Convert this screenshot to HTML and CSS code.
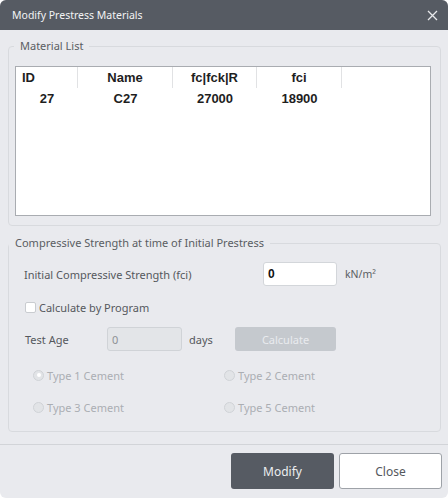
FILE: index.html
```html
<!DOCTYPE html>
<html>
<head>
<meta charset="utf-8">
<link rel="stylesheet" href="styles.css">
</head>
<body>
<div class="dialog">
  <div class="titlebar">
    <span class="title">Modify Prestress Materials</span>
    <svg class="close-x" width="11" height="11" viewBox="0 0 11 11"><path d="M1 1 L10 10 M10 1 L1 10" stroke="#e8e9eb" stroke-width="1.3" fill="none"/></svg>
  </div>
  <div class="body">
    <fieldset class="group group-list">
      <legend>Material List</legend>
      <div class="group-inner list-inner">
        <div class="listbox">
          <div class="lrow lhead">
            <div class="c c1 left">ID</div>
            <div class="c c2">Name</div>
            <div class="c c3">fc|fck|R</div>
            <div class="c c4">fci</div>
            <div class="c c5"></div>
          </div>
          <div class="lrow ldata">
            <div class="c c1">27</div>
            <div class="c c2">C27</div>
            <div class="c c3">27000</div>
            <div class="c c4">18900</div>
            <div class="c c5"></div>
          </div>
        </div>
      </div>
    </fieldset>
    <fieldset class="group group-strength">
      <legend>Compressive Strength at time of Initial Prestress</legend>
      <div class="group-inner strength-inner">
        <div class="row row-fci">
          <span class="lbl lbl-fci">Initial Compressive Strength (fci)</span>
          <div class="input">0</div>
          <span class="unit">kN/m²</span>
        </div>
        <div class="row row-check">
          <span class="checkbox"></span>
          <span class="lbl">Calculate by Program</span>
        </div>
        <div class="row row-age">
          <span class="lbl lbl-age">Test Age</span>
          <div class="input input-disabled">0</div>
          <span class="lbl lbl-days">days</span>
          <div class="btn-calc">Calculate</div>
        </div>
        <div class="row row-radio">
          <div class="radio-item"><span class="radio checked"></span><span>Type 1 Cement</span></div>
          <div class="radio-item"><span class="radio"></span><span>Type 2 Cement</span></div>
        </div>
        <div class="row row-radio row-radio2">
          <div class="radio-item"><span class="radio"></span><span>Type 3 Cement</span></div>
          <div class="radio-item"><span class="radio"></span><span>Type 5 Cement</span></div>
        </div>
      </div>
    </fieldset>
  </div>
  <div class="footer">
    <div class="btn btn-primary">Modify</div>
    <div class="btn btn-secondary">Close</div>
  </div>
</div>
</body>
</html>
```
FILE: styles.css
```css
html, body {
  margin: 0;
  padding: 0;
  background: #ffffff;
}
body {
  font-family: "Noto Sans", "Liberation Sans", Arial, sans-serif;
  font-size: 11px;
  color: #55585d;
}
.dialog {
  width: 448px;
  height: 498px;
  background: #e9eaee;
  border-radius: 6px;
  overflow: hidden;
  display: flex;
  flex-direction: column;
}
.titlebar {
  height: 30px;
  flex: none;
  background: #565b63;
  display: flex;
  align-items: center;
  justify-content: space-between;
  padding: 0 10px 0 12px;
  box-sizing: border-box;
}
.title {
  color: #f2f3f5;
  font-size: 10.5px;
  line-height: 14px;
}
.close-x {
  display: block;
  margin-top: 1px;
}
.body {
  flex: 1;
  display: flex;
  flex-direction: column;
}
.group {
  border: 1px solid #d8dade;
  border-radius: 4px;
  margin: 0 7px 0 8px;
  padding: 0;
  min-inline-size: 0;
}
.group legend {
  font-size: 11px;
  line-height: 14px;
  color: #5a5d62;
  padding: 0 6px;
}
.group-list {
  margin-top: 9px;
}
.group-list legend {
  margin-left: 5px;
}
.list-inner {
  padding: 13px 9px 9px 6px;
}
.listbox {
  height: 150px;
  box-sizing: border-box;
  background: #ffffff;
  border: 1px solid #a9acb1;
}
.lrow {
  display: flex;
  font-family: "Liberation Sans", Arial, sans-serif;
  font-weight: bold;
  font-size: 13px;
  color: #1e1e1e;
}
.lhead {
  height: 21px;
  align-items: stretch;
}
.ldata {
  height: 20px;
  align-items: center;
}
.c {
  box-sizing: border-box;
  text-align: center;
  display: flex;
  align-items: center;
  justify-content: center;
}
.c.left {
  justify-content: flex-start;
  padding-left: 6px;
}
.c1 { width: 62px; }
.c2 { width: 95px; }
.c3 { width: 84px; }
.c4 { width: 85px; }
.c5 { flex: 1; }
.lhead .c1, .lhead .c2, .lhead .c3, .lhead .c4 {
  border-right: 1px solid #e1e2e4;
}
.group-strength {
  margin-top: 10px;
}
.strength-inner {
  padding: 12px 8px 14px 16px;
}
.row {
  display: flex;
  align-items: center;
}
.row-fci {
  height: 24px;
}
.lbl-fci {
  width: 239px;
  margin-left: -1px;
}
.input {
  box-sizing: border-box;
  width: 74px;
  height: 24px;
  background: #ffffff;
  border: 1px solid #d3d6da;
  border-radius: 3px;
  display: flex;
  align-items: center;
  padding-left: 4px;
  color: #111;
  font-family: "Liberation Sans", Arial, sans-serif;
  font-size: 12px;
  font-weight: bold;
}
.unit {
  margin-left: 8px;
  color: #5a5d62;
  font-size: 10.5px;
}
.row-check {
  height: 20px;
  margin-top: 11px;
}
.checkbox {
  box-sizing: border-box;
  width: 11px;
  height: 11px;
  background: #ffffff;
  border: 1px solid #c9ccd0;
  border-radius: 2px;
  margin-right: 3px;
}
.row-age {
  height: 24px;
  margin-top: 10px;
}
.lbl-age {
  width: 82px;
}
.input-disabled {
  width: 75px;
  background: #e3e5e8;
  border-color: #d0d3d7;
  color: #8d9095;
  font-family: "Noto Sans", sans-serif;
  font-size: 11px;
  font-weight: normal;
}
.lbl-days {
  width: 46px;
  margin-left: 7px;
}
.btn-calc {
  box-sizing: border-box;
  width: 101px;
  height: 24px;
  background: #c5c9ce;
  border-radius: 3px;
  color: #e9ebee;
  display: flex;
  align-items: center;
  justify-content: center;
}
.row-radio {
  height: 20px;
  margin-top: 14px;
  padding-left: 8px;
  color: #abaeb3;
}
.row-radio2 {
  margin-top: 12px;
}
.radio-item {
  width: 191px;
  display: flex;
  align-items: center;
}
.radio {
  box-sizing: border-box;
  width: 11px;
  height: 11px;
  border-radius: 50%;
  background: #e2e4e7;
  border: 1px solid #d0d3d7;
  margin-right: 3px;
  position: relative;
}
.radio.checked::after {
  content: "";
  position: absolute;
  left: 2.5px;
  top: 2.5px;
  width: 4px;
  height: 4px;
  border-radius: 50%;
  background: #ffffff;
}
.footer {
  flex: none;
  border-top: 1px solid #d2d4d8;
  padding: 8px 6px 9px 0;
  display: flex;
  justify-content: flex-end;
  gap: 5px;
}
.btn {
  box-sizing: border-box;
  width: 103px;
  height: 36px;
  border-radius: 3px;
  display: flex;
  align-items: center;
  justify-content: center;
  font-size: 12px;
}
.btn-primary {
  background: #565b63;
  color: #eceef0;
}
.btn-secondary {
  background: #ffffff;
  border: 1px solid #9ea2a8;
  color: #55585d;
}
```
